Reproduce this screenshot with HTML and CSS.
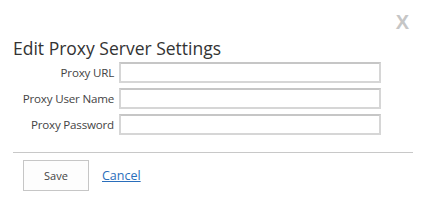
FILE: index.html
```html
<!DOCTYPE html>
<html lang="en">
<head>
  <meta charset="UTF-8">
  <title>Edit Proxy Server Settings</title>
  <link rel="stylesheet" href="styles.css">
</head>
<body>
  <div class="dialog">
    <div class="dialog-top">
      <span class="close-btn">X</span>
    </div>
    <h1 class="dialog-title">Edit Proxy Server Settings</h1>
    <div class="form-grid">
      <label class="field-label">Proxy URL</label>
      <input class="field-input" type="text">
      <label class="field-label">Proxy User Name</label>
      <input class="field-input" type="text">
      <label class="field-label">Proxy Password</label>
      <input class="field-input" type="password">
    </div>
    <div class="dialog-footer">
      <button class="save-button">Save</button>
      <a class="cancel-link" href="#">Cancel</a>
    </div>
  </div>
</body>
</html>
```

FILE: styles.css
```css
* {
  margin: 0;
  padding: 0;
  box-sizing: border-box;
}
body {
  font-family: "Open Sans", "Noto Sans", sans-serif;
  background-color: #ffffff;
  color: #444;
}

.dialog {
  width: 427px;
  padding: 0 14px 0 13px;
}

.dialog-top {
  display: flex;
  justify-content: flex-end;
  height: 36px;
  padding: 12px 4px 0 0;
}
.close-btn {
  font-family: "Liberation Sans", Arial, sans-serif;
  font-size: 20px;
  font-weight: bold;
  color: #c6c6c6;
  line-height: 20px;
}

.dialog-title {
  font-size: 17.5px;
  font-weight: normal;
  color: #333;
  line-height: 25px;
  margin-bottom: 1px;
}

.form-grid {
  display: grid;
  grid-template-columns: 101px 262px;
  column-gap: 5px;
  row-gap: 5px;
  align-items: center;
}
.field-label {
  text-align: right;
  font-size: 11.6px;
  letter-spacing: -0.2px;
  color: #444;
}
.field-input {
  height: 21px;
  border: 2px solid #d6d6d6;
  border-top-color: #c6c6c6;
  background: #fff;
}

.dialog-footer {
  margin-top: 17px;
  border-top: 1px solid #c8c8c8;
  padding: 7px 0 0 10px;
  display: flex;
  align-items: center;
  gap: 13px;
}
.save-button {
  width: 66px;
  height: 31px;
  border: 1px solid #c6c6c6;
  background: #fdfdfd;
  font-family: inherit;
  font-size: 11px;
  color: #444;
}
.cancel-link {
  font-size: 12.5px;
  color: #2a6ebb;
  text-decoration: underline;
}
```
